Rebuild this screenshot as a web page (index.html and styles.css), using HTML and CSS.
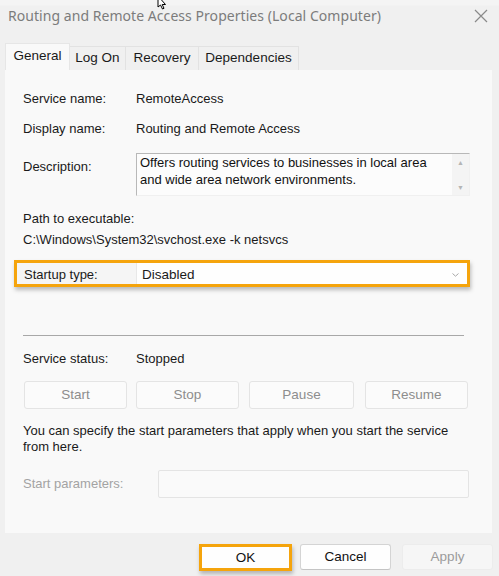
FILE: index.html
```html
<!DOCTYPE html>
<html lang="en">
<head>
    <meta charset="UTF-8">
    <title>Routing and Remote Access Properties (Local Computer)</title>
    <link rel="stylesheet" href="styles.css">
</head>
<body>
    <div class="window">
        <!-- Title bar -->
        <div class="titlebar">
            <span class="title">Routing and Remote Access Properties (Local Computer)</span>
            <svg class="close" width="14" height="14" viewBox="0 0 14 14">
                <path d="M1 1 L13 13 M13 1 L1 13" stroke="#8a8a8a" stroke-width="1.2" fill="none"/>
            </svg>
            <svg class="cursor" width="12" height="10" viewBox="0 0 12 10">
                <path d="M1 -4 L1 7 L3.5 5 L5.5 9 L7 8.3 L5.2 4.5 L8.5 4.5 Z" fill="#fff" stroke="#000" stroke-width="1"/>
            </svg>
        </div>

        <!-- Tabs -->
        <div class="tabs">
            <div class="tab active">General</div>
            <div class="tab">Log On</div>
            <div class="tab">Recovery</div>
            <div class="tab">Dependencies</div>
        </div>

        <div class="panel">
            <div class="row r-name">
                <span class="label">Service name:</span>
                <span>RemoteAccess</span>
            </div>
            <div class="row r-display">
                <span class="label">Display name:</span>
                <span>Routing and Remote Access</span>
            </div>
            <div class="row r-desc">
                <span class="label desc-label">Description:</span>
                <div class="textbox">
                    <div class="textbox-text">Offers routing services to businesses in local area and wide area network environments.</div>
                    <div class="scroll">
                        <span>&#9650;</span>
                        <span>&#9660;</span>
                    </div>
                </div>
            </div>
            <div class="path-label">Path to executable:</div>
            <div class="path-value">C:\Windows\System32\svchost.exe -k netsvcs</div>

            <div class="startup highlight">
                <span class="startup-label">Startup type:</span>
                <div class="select">
                    <span>Disabled</span>
                    <svg width="7" height="4" viewBox="0 0 7 4">
                        <path d="M0.5 0.5 L3.5 3.2 L6.5 0.5" stroke="#a8a8a8" stroke-width="1" fill="none"/>
                    </svg>
                </div>
            </div>

            <div class="separator"></div>

            <div class="row r-status">
                <span class="label">Service status:</span>
                <span>Stopped</span>
            </div>

            <div class="svc-buttons">
                <div class="btn disabled b-start">Start</div>
                <div class="btn disabled b-stop">Stop</div>
                <div class="btn disabled b-pause">Pause</div>
                <div class="btn disabled b-resume">Resume</div>
            </div>

            <p class="hint">You can specify the start parameters that apply when you start the service from here.</p>

            <div class="params">
                <span class="params-label">Start parameters:</span>
                <div class="params-input"></div>
            </div>
        </div>

        <!-- Dialog buttons -->
        <div class="footer">
            <div class="highlight ok-wrap">
                <div class="btn primary">OK</div>
            </div>
            <div class="btn normal cancel">Cancel</div>
            <div class="btn apply">Apply</div>
        </div>
    </div>
</body>
</html>
```

FILE: styles.css
```css
* {
    margin: 0;
    padding: 0;
    box-sizing: border-box;
}

body {
    width: 499px;
    height: 576px;
    overflow: hidden;
    background: #f0f0f0;
    font-family: "Liberation Sans", Arial, sans-serif;
    font-size: 13px;
    line-height: 16px;
    color: #1a1a1a;
}

.window {
    position: relative;
    height: 576px;
}

/* Title bar */
.titlebar {
    position: relative;
    height: 32px;
    display: flex;
    align-items: center;
    padding-left: 8px;
    background: linear-gradient(#f4f4f4 0, #f4f4f4 5px, #f0f0f0 6px);
}

.title {
    font-family: "Noto Sans", sans-serif;
    font-size: 14px;
    color: #7c7c7c;
    letter-spacing: 0.05px;
}

.close {
    position: absolute;
    left: 474px;
    top: 9px;
}

.cursor {
    position: absolute;
    left: 157px;
    top: 0;
}

/* Tabs */
.tabs {
    display: flex;
    align-items: flex-end;
    height: 38px;
    padding-left: 5px;
}

.tab {
    height: 24px;
    line-height: 22px;
    font-size: 13.5px;
    text-align: center;
    white-space: nowrap;
    color: #1a1a1a;
    background: #f0f0f0;
    border: 1px solid #e2e2e2;
    border-bottom: none;
    border-left: none;
}

.tab.active {
    width: 65px;
    height: 27px;
    line-height: 24px;
    background: #f9f9f9;
    border: 1px solid #e6e6e6;
    border-bottom: none;
}

.tab:nth-child(2) { width: 56px; }
.tab:nth-child(3) { width: 73px; }
.tab:nth-child(4) { width: 100px; }

.panel {
    margin: 0 7px 0 5px;
    height: 463px;
    background: #f9f9f9;
    padding: 0 0 0 18px;
    display: flex;
    flex-direction: column;
}

.row {
    display: flex;
}

.label {
    width: 113px;
    flex: none;
}

.r-name { margin-top: 21px; }
.r-display { margin-top: 14px; }

.r-desc {
    margin-top: 16px;
    height: 43px;
}

.desc-label {
    padding-top: 6px;
}

.textbox {
    width: 334px;
    height: 43px;
    display: flex;
    background: #fcfcfc;
    border: 1px solid #b8b8b8;
    border-right-color: #f0f0f0;
    border-bottom-color: #f0f0f0;
}

.textbox-text {
    width: 300px;
    padding: 0 0 0 3px;
    line-height: 17px;
    color: #111;
}

.scroll {
    margin-left: auto;
    width: 17px;
    display: flex;
    flex-direction: column;
    justify-content: space-between;
    align-items: center;
    padding: 4px 0 2px;
    background: #f4f4f4;
    font-size: 7px;
    line-height: 10px;
    color: #b5b5b5;
}

.path-label { margin-top: 15px; }
.path-value { margin-top: 5px; }

/* Orange highlight box */
.highlight {
    border: 3px solid #f5a40c;
    box-shadow: 1px 3px 4px rgba(0, 0, 0, 0.25);
}

.startup {
    margin: 12px 0 0 -9px;
    width: 456px;
    height: 27px;
    display: flex;
    align-items: stretch;
    background: #f5f5f5;
}

.startup-label {
    width: 119px;
    padding-left: 7px;
    line-height: 23px;
    flex: none;
}

.select {
    flex: 1;
    display: flex;
    align-items: center;
    justify-content: space-between;
    padding: 2px 8px 0 5px;
    background: #fefefe;
    border-left: 1px solid #e8e8e8;
    font-size: 13.5px;
}

.separator {
    margin-top: 48px;
    width: 441px;
    height: 1px;
    background: #a8a8a8;
}

.r-status { margin-top: 15px; }

/* Service buttons */
.svc-buttons {
    margin-top: 14px;
    display: flex;
    height: 28px;
}

.btn {
    display: flex;
    align-items: center;
    justify-content: center;
    border-radius: 3px;
    font-size: 13.5px;
}

.btn.disabled {
    height: 28px;
    color: #8d8d8d;
    background: #fbfbfb;
    border: 1px solid #e4e4e4;
}

.b-start { width: 103px; margin-left: 1px; }
.b-stop { width: 103px; margin-left: 9px; }
.b-pause { width: 105px; margin-left: 10px; }
.b-resume { width: 103px; margin-left: 11px; }

.hint {
    margin-top: 14px;
    width: 440px;
}

.params {
    margin-top: 15px;
    display: flex;
    align-items: center;
    height: 28px;
}

.params-label {
    width: 135px;
    color: #a3a3a3;
    flex: none;
}

.params-input {
    width: 311px;
    height: 28px;
    background: #fafafa;
    border: 1px solid #e4e4e4;
    border-radius: 2px;
}

/* Footer */
.footer {
    display: flex;
    padding: 11px 6px 0 0;
    justify-content: flex-end;
}

.ok-wrap {
    width: 93px;
    height: 27px;
}

.btn.primary {
    height: 21px;
    background: #fefefe;
    color: #111;
    border-radius: 0;
}

.btn.normal {
    width: 91px;
    height: 26px;
    margin-left: 8px;
    background: #fefefe;
    color: #111;
    border: 1px solid #d4d4d4;
    border-bottom-color: #c4c4c4;
}

.btn.apply {
    width: 91px;
    height: 26px;
    margin-left: 11px;
    background: #f6f6f6;
    color: #9b9b9b;
    border: 1px solid #ececec;
}
```
